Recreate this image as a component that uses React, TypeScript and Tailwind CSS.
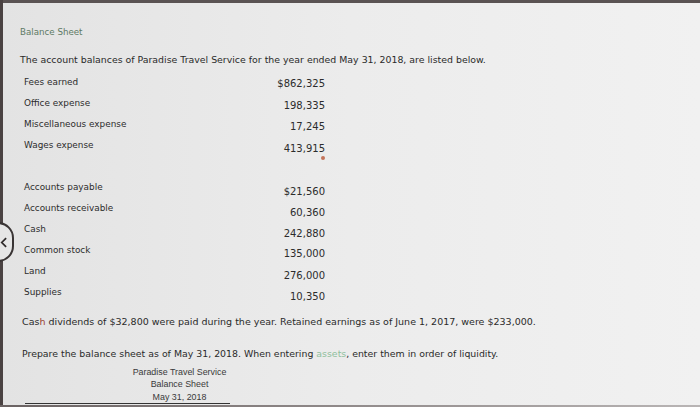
const rows = [
  { label: 'Fees earned', value: '$862,325', shift: 'pt-0' },
  { label: 'Office expense', value: '198,335', shift: 'pt-[1px]' },
  { label: 'Miscellaneous expense', value: '17,245', shift: 'pt-[1px]' },
  { label: 'Wages expense', value: '413,915', shift: 'pt-[2px]' },
]

const rows2 = [
  { label: 'Accounts payable', value: '$21,560', shift: 'pt-[3px]' },
  { label: 'Accounts receivable', value: '60,360', shift: 'pt-[3px]' },
  { label: 'Cash', value: '242,880', shift: 'pt-[3px]' },
  { label: 'Common stock', value: '135,000', shift: 'pt-[2px]' },
  { label: 'Land', value: '276,000', shift: 'pt-[3px]' },
  { label: 'Supplies', value: '10,350', shift: 'pt-[3px]' },
]

function Row({ label, value, shift }: { label: string; value: string; shift: string }) {
  return (
    <div className="flex h-[21px] items-start">
      <span className="w-[200px] pl-[4px] text-[8.9px] text-[#2c2c2c]">{label}</span>
      <span className={`w-[105px] text-right text-[10px] text-[#2c2c2c] ${shift}`}>{value}</span>
    </div>
  )
}

export default function App() {
  return (
    <div
      className="relative h-[407px] w-[700px] overflow-hidden bg-gradient-to-r from-[#e3e3e3] via-[#ececec] to-[#f1f1f1]"
      style={{ fontFamily: '"DejaVu Sans", Verdana, sans-serif' }}
    >
      {/* screen bezel edges */}
      <div className="absolute left-0 right-0 top-0 h-[3px] bg-[#5a5353]" />
      <div className="absolute bottom-0 left-0 top-0 w-[3px] bg-[#4a4242]" />
      <div className="absolute bottom-0 left-0 right-0 h-[2px] bg-gradient-to-r from-[#6b6363] to-[#b9b5b5]" />

      {/* nav circle */}
      <div className="absolute left-[-18px] top-[222px] flex h-[40px] w-[32px] items-center justify-end rounded-full border-[2px] border-[#3a3535] bg-[#e6e6e6] pr-[5px]">
        <svg width="7" height="11" viewBox="0 0 8 12" fill="none" stroke="#2f2b2b" strokeWidth="2">
          <path d="M7 1L2 6l5 5" />
        </svg>
      </div>

      <div className="flex flex-col pl-[20px] pt-[26px]">
        <div className="text-[8.7px] text-[#5d7a64]">Balance Sheet</div>
        <div className="mt-[14px] text-[9.4px] text-[#2a2a2a]">
          The account balances of Paradise Travel Service for the year ended May 31, 2018, are listed below.
        </div>

        <div className="mt-[9px] flex flex-col">
          {rows.map((r) => (
            <Row key={r.label} {...r} />
          ))}
          <div className="flex h-[21px] items-start">
            <span className="ml-[301px] mt-[-4px] h-[4px] w-[4px] rounded-full bg-[#c4745a]" />
          </div>
          {rows2.map((r) => (
            <Row key={r.label} {...r} />
          ))}
        </div>

        <div className="ml-[2px] mt-[8px] text-[9.5px] text-[#2a2a2a]">
          Cas<span className="text-[#9a4536]">h</span> dividends of $32,800 were paid during the year. Retained earnings as of June 1, 2017, were $233,000.
        </div>

        <div className="ml-[2px] mt-[18px] text-[9.4px] text-[#2a2a2a]">
          Prepare the balance sheet as of May 31, 2018. When entering <span className="text-[#8fbf9c]">assets</span>, enter them in order of liquidity.
        </div>

        <div
          className="ml-[5px] mt-[4px] flex w-[205px] flex-col items-center border-b border-[#333] pl-[104px] text-[8.9px] leading-[12.6px] text-[#3a3a3a]"
          style={{ fontFamily: '"Liberation Sans", Arial, sans-serif' }}
        >
          <span>Paradise Travel Service</span>
          <span>Balance Sheet</span>
          <span>May 31, 2018</span>
        </div>
      </div>
    </div>
  )
}
